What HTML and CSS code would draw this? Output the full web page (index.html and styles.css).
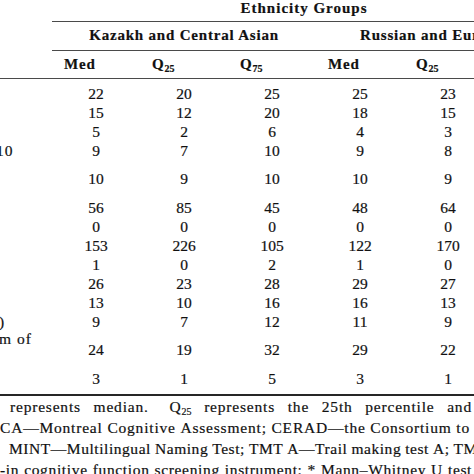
FILE: index.html
```html
<!DOCTYPE html>
<html>
<head>
<meta charset="utf-8">
<link rel="stylesheet" href="styles.css">
</head>
<body>
<div class="page">
  <table class="tbl">
    <colgroup>
      <col class="c-label">
      <col class="c-data"><col class="c-data"><col class="c-data">
      <col class="c-data"><col class="c-data"><col class="c-data">
    </colgroup>
    <thead>
      <tr class="h-top">
        <th class="lbl-head" rowspan="3"></th>
        <th class="eth" colspan="6">Ethnicity Groups</th>
      </tr>
      <tr class="h-group">
        <th colspan="3">Kazakh and Central Asian</th>
        <th colspan="3" class="grp2">Russian and European</th>
      </tr>
      <tr class="h-sub">
        <th>Med</th>
        <th>Q<sub>25</sub></th>
        <th>Q<sub>75</sub></th>
        <th>Med</th>
        <th>Q<sub>25</sub></th>
        <th>Q<sub>75</sub></th>
      </tr>
    </thead>
    <tbody>
      <tr class="first"><td class="lbl"></td><td>22</td><td>20</td><td>25</td><td>25</td><td>23</td><td></td></tr>
      <tr><td class="lbl"></td><td>15</td><td>12</td><td>20</td><td>18</td><td>15</td><td></td></tr>
      <tr><td class="lbl"></td><td>5</td><td>2</td><td>6</td><td>4</td><td>3</td><td></td></tr>
      <tr><td class="lbl"><span class="frag frag-10">10</span></td><td>9</td><td>7</td><td>10</td><td>9</td><td>8</td><td></td></tr>
      <tr class="dbl"><td class="lbl"></td><td>10</td><td>9</td><td>10</td><td>10</td><td>9</td><td></td></tr>
      <tr><td class="lbl"></td><td>56</td><td>85</td><td>45</td><td>48</td><td>64</td><td></td></tr>
      <tr><td class="lbl"></td><td>0</td><td>0</td><td>0</td><td>0</td><td>0</td><td></td></tr>
      <tr><td class="lbl"></td><td>153</td><td>226</td><td>105</td><td>122</td><td>170</td><td></td></tr>
      <tr><td class="lbl"></td><td>1</td><td>0</td><td>2</td><td>1</td><td>0</td><td></td></tr>
      <tr><td class="lbl"></td><td>26</td><td>23</td><td>28</td><td>29</td><td>27</td><td></td></tr>
      <tr><td class="lbl"></td><td>13</td><td>10</td><td>16</td><td>16</td><td>13</td><td></td></tr>
      <tr><td class="lbl"><span class="frag frag-paren">)</span></td><td>9</td><td>7</td><td>12</td><td>11</td><td>9</td><td></td></tr>
      <tr class="dbl"><td class="lbl lbl-top"><span class="frag frag-mof">m of</span></td><td>24</td><td>19</td><td>32</td><td>29</td><td>22</td><td></td></tr>
      <tr class="last"><td class="lbl"></td><td>3</td><td>1</td><td>5</td><td>3</td><td>1</td><td></td></tr>
    </tbody>
  </table>
  <div class="notes">
    <div class="nl nl1"><span>represents</span><span>median.</span><span class="gap">Q<sub>25</sub></span><span>represents</span><span>the</span><span>25th</span><span>percentile</span><span>and</span></div>
    <div class="nl nl2"><span>CA—Montreal</span><span>Cognitive</span><span>Assessment;</span><span>CERAD—the</span><span>Consortium</span><span>to</span></div>
    <div class="nl nl3"><span>MINT—Multilingual</span><span>Naming</span><span>Test;</span><span>TMT</span><span>A—Trail</span><span>making</span><span>test</span><span>A;</span><span>TMT</span></div>
    <div class="nl nl4"><span>-in</span><span>cognitive</span><span>function</span><span>screening</span><span>instrument;</span><span>*</span><span>Mann–Whitney</span><span>U</span><span>test</span></div>
  </div>
</div>
</body>
</html>
```

FILE: styles.css
```css
html, body {
  margin: 0;
  padding: 0;
  background: #ffffff;
}

.page {
  width: 474px;
  height: 474px;
  overflow: hidden;
  font-family: "Liberation Serif", "Times New Roman", serif;
  font-size: 15px;
  color: #111111;
  -webkit-text-stroke: 0.2px #111111;
}

.tbl {
  width: 580px;
  table-layout: fixed;
  border-collapse: separate;
  border-spacing: 0;
}

.c-label { width: 52px; }
.c-data { width: 88px; }

th {
  font-weight: bold;
  letter-spacing: 0.8px;
  line-height: 17px;
  padding: 0;
  white-space: nowrap;
  overflow: hidden;
}

.h-top th.eth {
  padding: 0 24px 4px 0;
  text-align: center;
  border-bottom: 1px solid #4a4a4a;
  letter-spacing: 1px;
}

.h-group th {
  padding: 5px 0 6px;
  text-align: center;
  border-bottom: 1px solid #4a4a4a;
}

.h-group th.grp2 {
  text-align: left;
  padding-left: 44px;
}

.h-sub th {
  padding: 5px 0 5px 12px;
  text-align: left;
  border-bottom: 1px solid #4a4a4a;
}

.lbl-head {
  border-bottom: 1px solid #4a4a4a;
}

sub {
  font-size: 10px;
  line-height: 0;
  vertical-align: -3px;
  letter-spacing: 0;
}

td {
  padding: 0;
  font-size: 15.5px;
  line-height: 19px;
  text-align: center;
  white-space: nowrap;
}

tr.first td {
  padding-top: 5px;
}

tr.dbl td {
  padding-top: 9px;
  padding-bottom: 10px;
}

tr.last td {
  padding-bottom: 6px;
  border-bottom: 2px solid #262626;
}

td.lbl {
  text-align: left;
  overflow: visible;
  letter-spacing: 1px;
}

tr.dbl td.lbl-top {
  vertical-align: top;
  padding-top: 0;
}

.frag {
  display: block;
}

.frag-10 {
  margin-left: -4px;
}

.frag-paren {
  margin-left: -1px;
}

.frag-mof {
  margin-left: -1px;
  margin-top: -2px;
}

.notes {
  font-size: 15.5px;
  line-height: 21px;
  letter-spacing: 0.8px;
  white-space: nowrap;
}

.nl {
  display: flex;
  justify-content: space-between;
}

.nl1 {
  margin-left: 10px;
  width: 462px;
}

.nl1 .gap {
  margin-left: 8px;
}

.nl2 {
  width: 470px;
}

.nl3 {
  margin-left: 9px;
  justify-content: flex-start;
  gap: 4px;
  letter-spacing: 0.55px;
}

.nl4 {
  justify-content: flex-start;
  gap: 5px;
  letter-spacing: 0.65px;
}
```
